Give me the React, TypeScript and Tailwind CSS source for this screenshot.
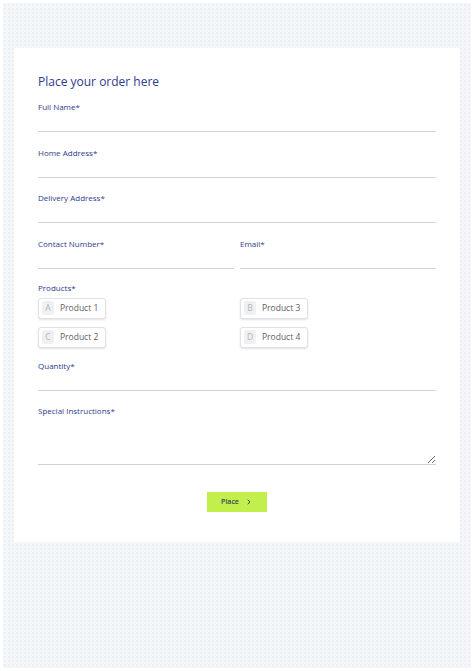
import { ChevronRight } from 'lucide-react';

const labelCls = 'block text-[8px] leading-[12px] font-medium text-[#2e3a8c]';

function LineField({ label }: { label: string }) {
  return (
    <div className="flex flex-col">
      <span className={labelCls}>{label}</span>
      <div className="h-[19px] border-b border-[#cfd3d8]" />
    </div>
  );
}

function Chip({ letter, text }: { letter: string; text: string }) {
  return (
    <div className="flex h-[21px] w-[68px] items-center gap-[6px] rounded-[3px] border border-[#dfe2e6] bg-white pl-[3px] shadow-[0_1px_2px_rgba(0,0,0,0.12)]">
      <span className="flex h-[14px] w-[12px] items-center justify-center rounded-[2px] bg-[#eef0f2] text-[8.5px] text-[#b0b5bc]">
        {letter}
      </span>
      <span className="text-[8.5px] text-[#5b6068]">{text}</span>
    </div>
  );
}

export default function App() {
  return (
    <div className="h-[671px] w-[474px] bg-white p-[3px] font-['Open_Sans',sans-serif]">
      <div className="h-full w-full bg-[#f4f7f9] bg-[radial-gradient(#ecf0f2_0.8px,transparent_0.8px)] bg-[size:4px_4px] pl-[11px] pr-[11px] pt-[45px]">
        <div className="flex w-[446px] flex-col bg-white px-[24px] pb-[30px] pt-[26px]">
          <h1 className="text-[12px] leading-[16px] text-[#2e3a8c]">Place your order here</h1>

          <div className="mt-[11px] flex flex-col gap-[14.7px]">
            <LineField label="Full Name*" />
            <LineField label="Home Address*" />
            <LineField label="Delivery Address*" />
            <div className="grid grid-cols-2 gap-[6px]">
              <LineField label="Contact Number*" />
              <LineField label="Email*" />
            </div>

            <div className="-mt-[2px] flex flex-col">
              <span className={labelCls}>Products*</span>
              <div className="mt-[4px] grid grid-cols-2 gap-x-[6px] gap-y-[8px]">
                <Chip letter="A" text="Product 1" />
                <Chip letter="B" text="Product 3" />
                <Chip letter="C" text="Product 2" />
                <Chip letter="D" text="Product 4" />
              </div>
            </div>

            <div className="-mt-[2.7px]">
              <LineField label="Quantity*" />
            </div>

            <div className="flex flex-col">
              <span className={labelCls}>Special Instructions*</span>
              <textarea className="h-[48px] resize-y border-b border-[#cfd3d8] outline-none" />
            </div>
          </div>

          <div className="mt-[27px] flex justify-center">
            <button className="flex h-[20px] w-[60px] items-center justify-center gap-[6px] bg-[#c3ef4c] text-[7px] font-semibold text-[#3b4452]">
              Place
              <ChevronRight size={8} strokeWidth={3} />
            </button>
          </div>
        </div>
      </div>
    </div>
  );
}
